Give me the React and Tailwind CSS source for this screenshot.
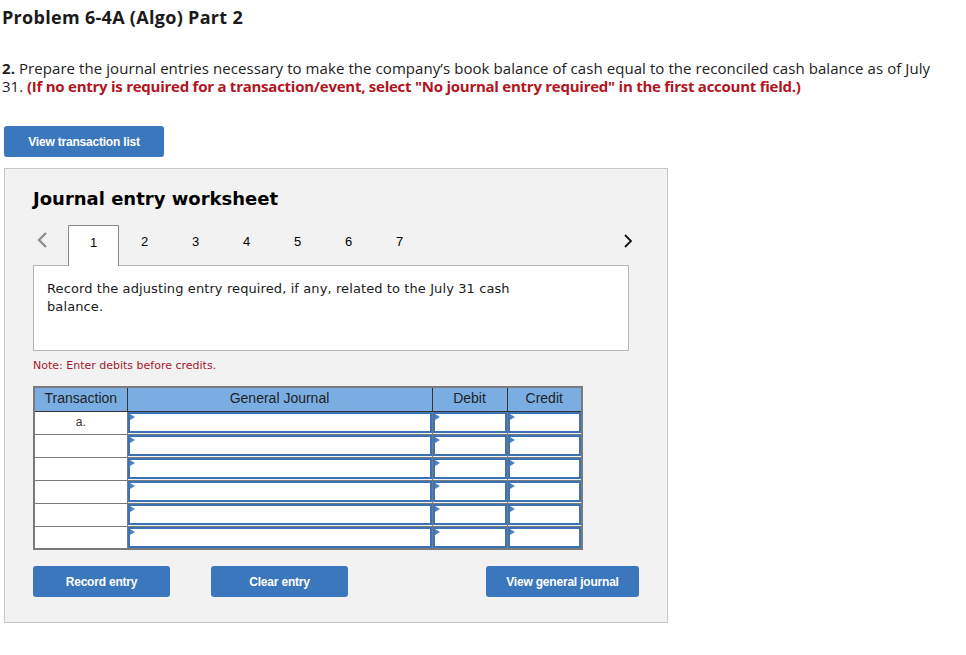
import React from "react";

const Tri = () => (
  <span className="absolute left-0 top-0 w-0 h-0 border-y-[3.5px] border-y-transparent border-l-[5px] border-l-[#4a82c8]" />
);

function InputCell() {
  return (
    <td className="p-0 border border-[#7a7a7a] h-[23px]">
      <div className="relative h-[21px] border-2 border-[#3c72b6] bg-white">
        <Tri />
      </div>
    </td>
  );
}

export default function App() {
  const rows = ["a.", "", "", "", "", ""];
  return (
    <div className="w-[966px] h-[655px] bg-white text-black relative overflow-hidden">
      <div className="pl-[2px] pt-[6px]">
        <h1 className="text-[18px] leading-[22px] font-bold text-[#1a1a1a] font-['Open_Sans',sans-serif] tracking-[0.3px]">
          Problem 6-4A (Algo) Part 2
        </h1>
        <p className="mt-[31px] text-[15px] leading-[18px] text-[#222] font-['Open_Sans',sans-serif] whitespace-nowrap">
          <span className="tracking-[0.07px]">
            <b className="font-bold">2.</b> Prepare the journal entries necessary to make the company’s book balance of cash equal to the reconciled cash balance as of July
          </span>
          <br />
          31.{" "}
          <b className="font-bold text-[#b3141d] tracking-[-0.25px]">
            (If no entry is required for a transaction/event, select "No journal entry required" in the first account field.)
          </b>
        </p>
      </div>

      <div className="pl-[4px] mt-[31px]">
        <button className="w-[160px] h-[31px] rounded-[3px] bg-[#3a77bc] text-white text-[12px] font-bold font-['Liberation_Sans_Narrow','Liberation_Sans',sans-serif] tracking-[-0.2px]">
          View transaction list
        </button>
      </div>

      <div className="ml-[4px] mt-[11px] w-[664px] h-[455px] border border-[#c8c8c8] bg-[#f2f2f2] pl-[28px] pt-[19px] font-['DejaVu_Sans','Verdana',sans-serif]">
        <h2 className="text-[18px] leading-[22px] font-bold text-black">Journal entry worksheet</h2>

        <div className="mt-[15px] w-[596px] flex items-end relative">
          <div className="w-[35px] h-[40px] flex items-start pt-[7px] justify-start pl-[3px]">
            <svg width="12" height="16" viewBox="0 0 12 16">
              <polyline points="10,1 3,8 10,15" fill="none" stroke="#8a8a8a" strokeWidth="2.2" />
            </svg>
          </div>
          {[1, 2, 3, 4, 5, 6, 7].map((n) => (
            <div
              key={n}
              className={
                n === 1
                  ? "relative z-10 -mb-px w-[51px] h-[41px] bg-white border border-b-0 border-[#8a8a8a] flex items-start justify-center pt-[7px] text-[13px] font-['Liberation_Sans',sans-serif]"
                  : "w-[51px] h-[40px] flex items-start justify-center pt-[7px] text-[13px] font-['Liberation_Sans',sans-serif]"
              }
            >
              {n}
            </div>
          ))}
          <div className="flex-1" />
          <div className="h-[40px] flex items-start pt-[9px] -mr-[4px]">
            <svg width="10" height="14" viewBox="0 0 10 14">
              <polyline points="2,1 8,7 2,13" fill="none" stroke="#111" strokeWidth="1.8" />
            </svg>
          </div>
        </div>

        <div className="w-[596px] h-[86px] bg-white border border-[#b5b5b5] pl-[13px] pt-[14px] pr-[100px] text-[13px] leading-[18px] text-[#1a1a1a] tracking-[0.1px]">
          Record the adjusting entry required, if any, related to the July 31 cash balance.
        </div>

        <div className="mt-[7px] text-[11px] leading-[15px] text-[#a3172e]">Note: Enter debits before credits.</div>

        <table className="mt-[13px] w-[548px] border-collapse border-2 border-[#7a7a7a] font-['Liberation_Sans',sans-serif] text-[14px] table-fixed">
          <colgroup>
            <col className="w-[93px]" />
            <col className="w-[305px]" />
            <col className="w-[75px]" />
            <col className="w-[75px]" />
          </colgroup>
          <thead>
            <tr className="h-[24px] bg-[#7aaee3] text-[#1f1f1f]">
              <th className="font-normal border border-[#333] border-t-[#7a7a7a] border-l-[#7a7a7a] pb-[1px]">Transaction</th>
              <th className="font-normal border border-[#333] border-t-[#7a7a7a] pb-[1px]">General Journal</th>
              <th className="font-normal border border-[#333] border-t-[#7a7a7a] pb-[1px]">Debit</th>
              <th className="font-normal border border-[#333] border-t-[#7a7a7a] border-r-[#7a7a7a] pb-[1px]">Credit</th>
            </tr>
          </thead>
          <tbody>
            {rows.map((r, i) => (
              <tr key={i} className="h-[23px]">
                <td className="p-0 border border-[#7a7a7a] bg-white text-center align-top pt-[1px] text-[12px] text-[#333]">{r}</td>
                <InputCell />
                <InputCell />
                <InputCell />
              </tr>
            ))}
          </tbody>
        </table>

        <div className="mt-[16px] flex w-[606px] font-['Liberation_Sans_Narrow','Liberation_Sans',sans-serif]">
          <button className="w-[137px] h-[31px] rounded-[3px] bg-[#3a77bc] text-white text-[12px] font-bold tracking-[-0.2px]">Record entry</button>
          <button className="ml-[41px] w-[137px] h-[31px] rounded-[3px] bg-[#3a77bc] text-white text-[12px] font-bold tracking-[-0.2px]">Clear entry</button>
          <div className="flex-1" />
          <button className="w-[153px] h-[31px] rounded-[3px] bg-[#3a77bc] text-white text-[12px] font-bold tracking-[-0.2px]">View general journal</button>
        </div>
      </div>
    </div>
  );
}
